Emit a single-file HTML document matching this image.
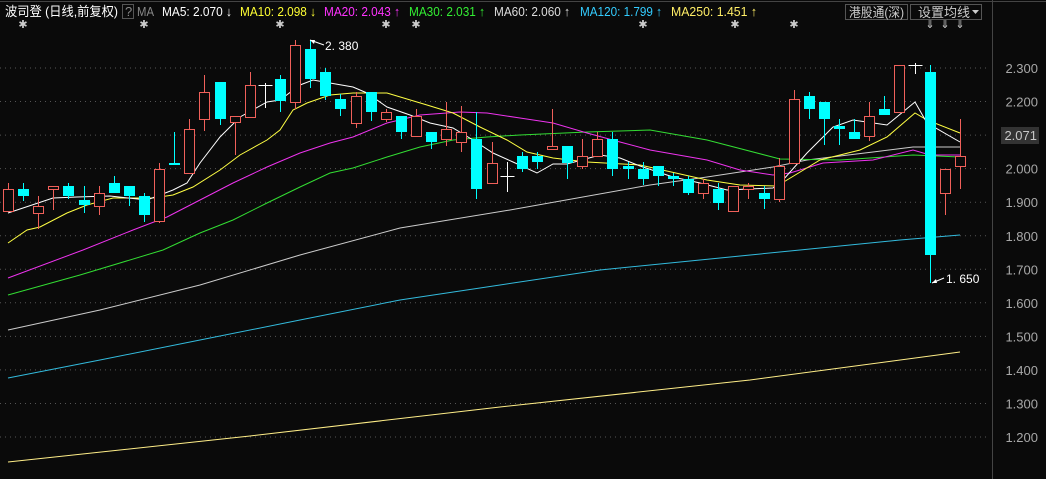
<!DOCTYPE html>
<html><head><meta charset="utf-8"><style>
body{margin:0;background:#0a0a0a;width:1046px;height:479px;overflow:hidden;font-family:"Liberation Sans","Noto Sans CJK SC",sans-serif;}
svg{position:absolute;left:0;top:0}
</style></head><body>
<svg id="s" width="1046" height="479" xmlns="http://www.w3.org/2000/svg">
<rect width="1046" height="479" fill="#0a0a0a"/>
<line x1="0" y1="1.5" x2="1046" y2="1.5" stroke="#444"/>
<line x1="992.5" y1="0" x2="992.5" y2="479" stroke="#444"/>
<g id="grid" stroke="#555" stroke-dasharray="1,4"></g>
<g id="lbl" fill="#a8a8a8" font-size="13" text-anchor="end"></g>
<rect x="1001" y="127" width="38" height="17" fill="#333"/>
<text x="1037" y="140" fill="#c8c8c8" font-size="13" text-anchor="end">2.071</text>
<g font-size="13" lengthAdjust="spacingAndGlyphs">
<text x="5" y="16" fill="#ffffff" textLength="113" lengthAdjust="spacingAndGlyphs">波司登 (日线,前复权)</text>
<rect x="122.5" y="4.5" width="11" height="14" fill="none" stroke="#555"/>
<text x="125" y="16" fill="#888">?</text>
<text x="137" y="16" fill="#888" textLength="17" lengthAdjust="spacingAndGlyphs">MA</text>
<text x="162" y="16" fill="#fff" textLength="70" lengthAdjust="spacingAndGlyphs">MA5: 2.070 ↓</text>
<text x="240" y="16" fill="#ffff33" textLength="76" lengthAdjust="spacingAndGlyphs">MA10: 2.098 ↓</text>
<text x="324" y="16" fill="#ff33ff" textLength="76" lengthAdjust="spacingAndGlyphs">MA20: 2.043 ↑</text>
<text x="409" y="16" fill="#33ee33" textLength="76" lengthAdjust="spacingAndGlyphs">MA30: 2.031 ↑</text>
<text x="494" y="16" fill="#dddddd" textLength="76" lengthAdjust="spacingAndGlyphs">MA60: 2.060 ↑</text>
<text x="580" y="16" fill="#33ccff" textLength="82" lengthAdjust="spacingAndGlyphs">MA120: 1.799 ↑</text>
<text x="671" y="16" fill="#ffee66" textLength="86" lengthAdjust="spacingAndGlyphs">MA250: 1.451 ↑</text>
</g>
<rect x="845.5" y="4.5" width="62" height="15" fill="none" stroke="#555"/>
<text x="849" y="17" fill="#ccc" font-size="13" textLength="55" lengthAdjust="spacingAndGlyphs">港股通(深)</text>
<rect x="910.5" y="4.5" width="71" height="15" fill="none" stroke="#555"/>
<text x="918" y="17" fill="#ccc" font-size="13">设置均线</text>
<path d="M972 10h7l-3.5 4z" fill="#ccc"/>
<g fill="#ccc" font-size="11" text-anchor="middle">
<text x="23" y="28">✱</text><text x="144" y="28">✱</text><text x="280" y="28">✱</text><text x="386" y="28">✱</text><text x="416" y="28">✱</text><text x="643" y="28">✱</text><text x="735" y="28">✱</text><text x="794" y="28">✱</text>
<text x="930" y="28">⇓</text><text x="945" y="28">⇓</text><text x="960" y="28">⇓</text>
</g>
<g id="ma" fill="none" stroke-width="1"></g>
<g id="c"></g>
<g fill="#fff" font-size="12">
<text x="325" y="50">2. 380</text>
<path d="M310 40 L324 45" stroke="#fff"/><path d="M310 40l5 0l-1 4z" fill="#fff"/>
<text x="946" y="283">1. 650</text>
<path d="M932 283 L944 278" stroke="#fff"/><path d="M932 283l4-4l1 4z" fill="#fff"/>
</g>
</svg>
<script>
var NS="http://www.w3.org/2000/svg";
function el(p,t,a){var e=document.createElementNS(NS,t);for(var k in a)e.setAttribute(k,a[k]);document.getElementById(p).appendChild(e);return e;}
var labs=["2.300","2.200","2.100","2.000","1.900","1.800","1.700","1.600","1.500","1.400","1.300","1.200"];
for(var i=0;i<12;i++){var y=68+i*33.55;el("grid","line",{x1:0,x2:990,y1:y.toFixed(1),y2:y.toFixed(1)});
if(i!=2){var t=el("lbl","text",{x:1038,y:(y+5).toFixed(1)});t.textContent=labs[i];}}
var C=[
['r',189,211,183,211],['c',189,196,183,201],['r',206,213,196,229],['r',186,189,186,210],['c',186,196,183,199],['c',200,205,186,213],['r',193,206,186,215],['c',183,193,176,193],['c',186,196,186,206],['c',196,215,193,222],
['r',169,221,163,223],['c',163,165,132,165],['r',129,173,119,173],['r',92,119,75,131],['c',82,119,82,125],['r',116,122,116,155],['r',85,117,72,117],['w',85,85,83,108],['c',79,101,75,112],['r',45,102,40,109],
['c',49,79,40,88],['c',72,96,68,100],['c',99,109,94,116],['r',96,123,92,128],['c',92,112,92,121],['r',112,119,109,122],['c',116,132,116,139],['r',116,136,109,136],['c',132,142,132,149],['r',129,139,102,146],
['r',132,142,106,152],['c',139,189,112,199],['r',163,183,142,183],['w',176,176,162,192],['c',156,169,152,172],['c',156,162,152,169],['r',146,149,109,149],['c',146,163,146,179],['r',156,166,139,169],['r',139,156,132,156],
['c',139,169,132,176],['c',166,169,162,179],['c',169,179,162,185],['c',166,176,166,186],['c',176,179,173,186],['c',179,193,176,195],['r',183,193,179,199],['c',189,203,183,210],['r',186,211,186,211],['r',186,189,183,199],
['c',193,199,186,209],['r',166,199,158,202],['r',99,163,90,163],['c',96,109,92,119],['c',102,119,102,145],['c',126,129,119,145],['c',132,139,119,139],['r',116,136,102,141],['c',109,115,96,115],['r',65,112,65,112],
['w',65,65,63,74],['c',72,255,65,283],['r',169,193,169,215],['r',156,166,119,189]];
for(var i=0;i<C.length;i++){var d=C[i],x=Math.round(8+15.11*i)+0.5;
var col=d[0]=='r'?'#f0605a':d[0]=='c'?'#00ffff':'#ffffff';
if(d[0]=='w'){el("c","line",{x1:x,x2:x,y1:d[3],y2:d[4],stroke:col});el("c","line",{x1:x-7,x2:x+7,y1:d[1]+.5,y2:d[1]+.5,stroke:col});continue;}
if(d[0]=='r'){el("c","line",{x1:x,x2:x,y1:d[3],y2:d[1],stroke:col});el("c","line",{x1:x,x2:x,y1:d[2],y2:d[4],stroke:col});
el("c","rect",{x:x-5,y:d[1]+.5,width:10,height:Math.max(1,d[2]-d[1]),fill:"#0a0a0a",stroke:col});}
else{el("c","line",{x1:x,x2:x,y1:d[3],y2:d[4],stroke:col});el("c","rect",{x:x-5.5,y:d[1],width:11,height:Math.max(2,d[2]-d[1]),fill:col});}}
var M=[
["#ffee88","8,462 250,436 500,407 750,380 960,352"],
["#33bbdd","8,378 100,360 200,340 300,320 400,300 500,285 600,270 700,260 800,250 900,240 960,235"],
["#cccccc","8,330 100,310 200,285 300,255 400,228 510,210 650,185 707,177 773,167 807,160 873,152 913,147 960,147"],
["#33dd33","8,295 80,275 163,250 200,233 233,220 267,203 300,187 330,173 353,168 387,157 420,147 453,140 487,137 520,135 587,132 650,130 707,140 780,159 840,160 913,155 960,157"],
["#ee33ee","8,278 83,250 133,230 167,217 200,200 233,183 267,167 300,153 330,143 353,137 387,123 420,115 460,112 487,113 520,118 553,123 587,133 620,142 650,150 707,160 740,170 773,175 790,173 823,163 873,160 913,150 930,155 960,155"],
["#ffff44","8,243 27,230 40,227 67,213 87,205 113,198 153,198 173,195 193,187 220,170 240,155 267,140 280,130 293,110 307,103 330,95 353,93 387,93 427,105 453,113 480,127 507,140 527,152 553,158 587,162 640,165 707,180 740,185 777,186 787,180 820,160 860,150 887,137 915,113 927,120 960,133"],
["#ffffff","8,213 53,198 77,197 110,196 147,200 160,195 173,190 187,183 200,163 220,137 240,117 267,102 280,100 300,85 313,80 330,83 353,87 367,93 387,107 410,115 430,123 453,128 473,140 493,153 513,162 537,173 553,164 567,164 600,155 620,158 640,166 673,177 700,183 727,190 773,188 783,180 807,153 833,127 853,120 887,125 915,102 927,123 960,142"]];
M.forEach(function(m){el("ma","polyline",{points:m[1],stroke:m[0]});});
</script>
</body></html>
